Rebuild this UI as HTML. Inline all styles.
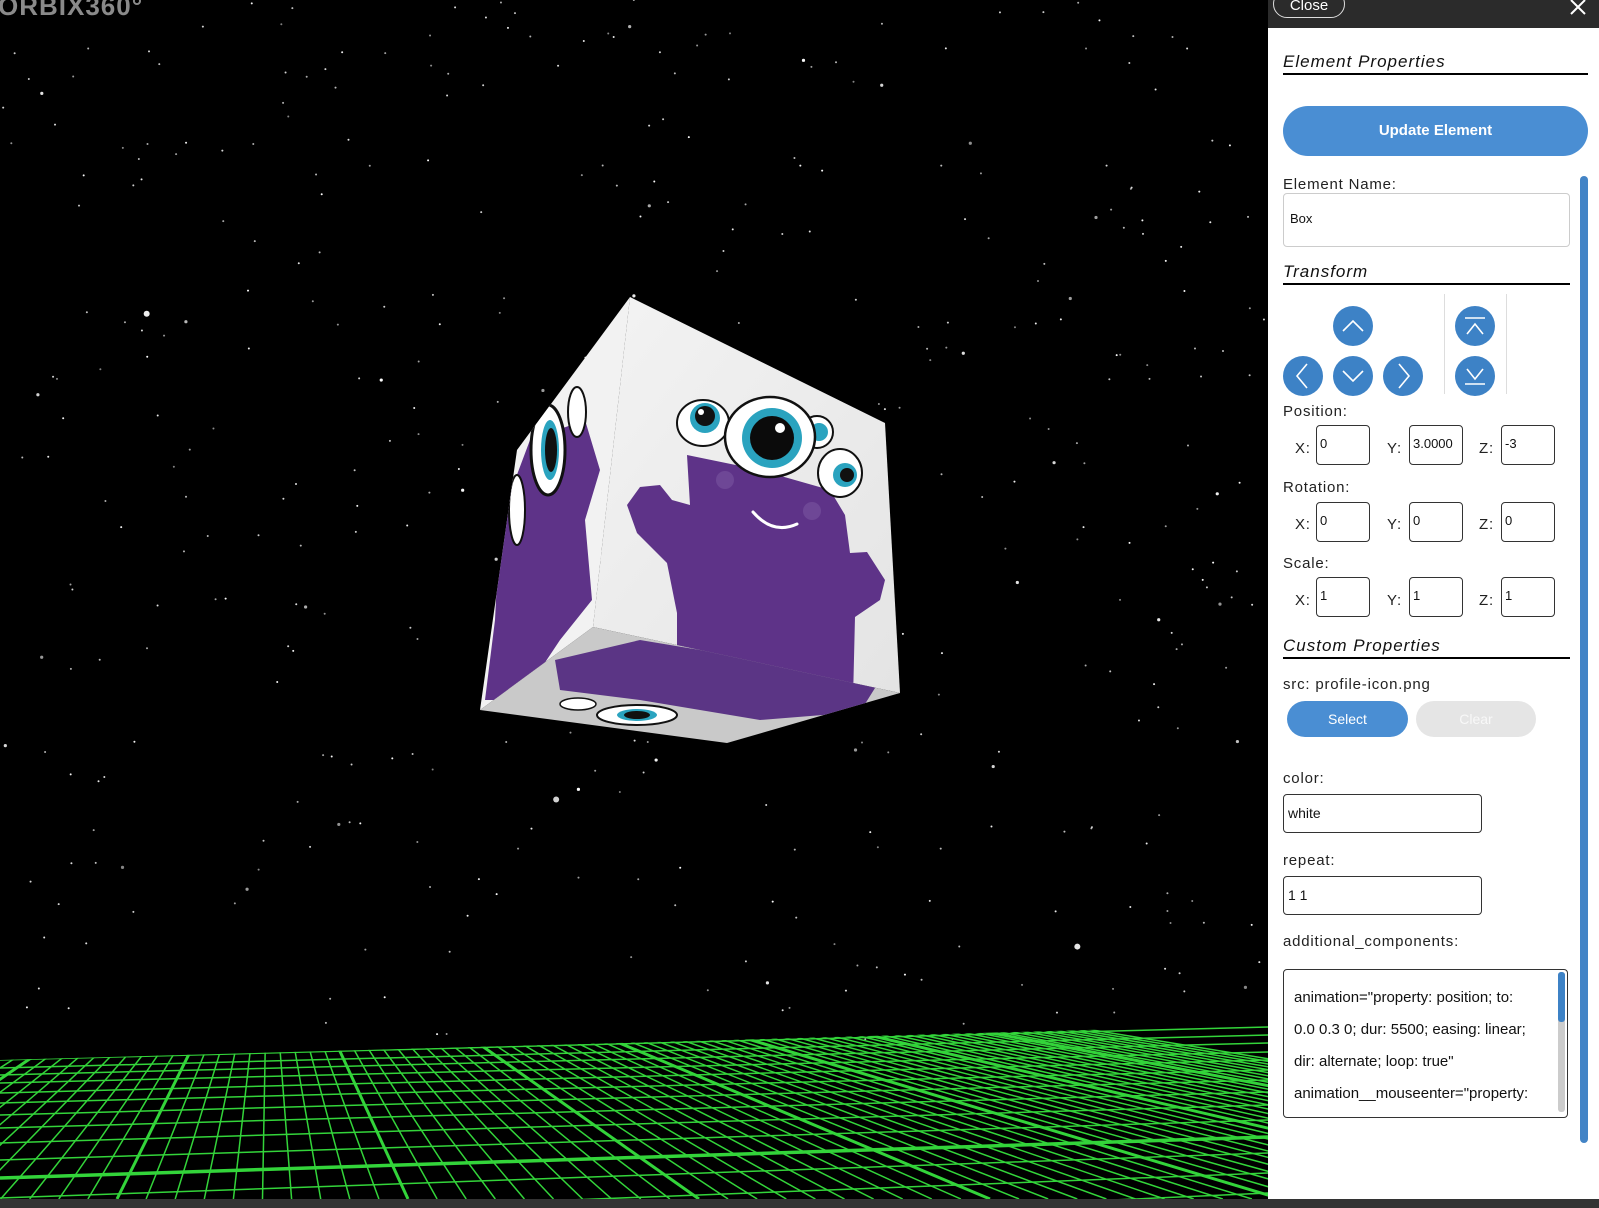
<!DOCTYPE html>
<html style="overflow:hidden"><head><meta charset="utf-8">
<style>
*{box-sizing:border-box;margin:0;padding:0}
body{width:1599px;height:1208px;overflow:hidden;background:#000;font-family:"Liberation Sans",sans-serif;position:relative}
#scene{position:absolute;left:0;top:0}
.logo{position:absolute;left:-2px;top:-9px;font-size:26px;font-weight:bold;color:#8a8a8a;letter-spacing:1px}
.panel{position:absolute;left:1268px;top:0;width:331px;height:1199px;background:#fff;overflow:hidden}
.hdr{position:absolute;left:0;top:0;width:331px;height:28px;background:#2b2b2b}
.close{position:absolute;left:5px;top:-10px;width:72px;height:28px;border:1.5px solid #ddd;border-radius:14px;color:#fff;font-size:15px;text-align:center;line-height:30px}
.a{position:absolute;color:#222;font-size:15px;letter-spacing:0.8px}
.h{position:absolute;font-style:italic;font-size:17px;letter-spacing:1px;color:#111;border-bottom:2px solid #000;padding-bottom:1px}
.btn{position:absolute;background:#4a8ed3;color:#fff;text-align:center;border-radius:26px;font-weight:bold}
.in{position:absolute;border:1px solid #333;border-radius:4px;font-size:13px;padding:10px 3px;color:#111;background:#fff}
.c{position:absolute;width:40px;height:40px;border-radius:50%;background:#3d82c6}
.sep{position:absolute;top:294px;height:100px;border-left:1px solid #ddd}
</style></head><body>
<svg id="scene" width="1268" height="1199" xmlns="http://www.w3.org/2000/svg">
<defs>
<clipPath id="gclip"><polygon points="0,1060 1268,1025 1268,1199 0,1199"/></clipPath>
<clipPath id="front"><polygon points="630,297 885,423 900,693 593,627"/></clipPath>
<clipPath id="left"><polygon points="630,297 593,627 480,710 517,450"/></clipPath>
<clipPath id="bot"><polygon points="593,627 900,693 727,743 480,710"/></clipPath>
<linearGradient id="fg" x1="0" y1="0" x2="1" y2="1"><stop offset="0" stop-color="#f3f3f3"/><stop offset="1" stop-color="#e4e4e4"/></linearGradient>
</defs>
<g id="stars"></g>
<g id="grid" clip-path="url(#gclip)"></g>
<polygon points="630,297 593,627 480,710 517,450" fill="#f2f2f2"/>
<polygon points="630,297 885,423 900,693 593,627" fill="url(#fg)"/>
<polygon points="593,627 900,693 727,743 480,710" fill="#c9c9c9"/>
<g clip-path="url(#front)">
<path d="M687,455 L760,470 L830,490 L845,515 L850,553 L867,552 L885,580 L880,600 L855,617 L853,700 L677,660 L677,613 L667,563 L637,533 L627,505 L640,487 L660,485 L672,500 L690,505 Z" fill="#5e3388"/>
<ellipse cx="703" cy="423" rx="26" ry="23" fill="#fff" stroke="#111" stroke-width="2"/>
<circle cx="705" cy="418" r="15" fill="#2aa3bf"/><circle cx="705" cy="416" r="10" fill="#111"/><circle cx="701" cy="412" r="3" fill="#fff"/>
<circle cx="817" cy="432" r="16" fill="#fff" stroke="#111" stroke-width="2"/><circle cx="819" cy="432" r="9" fill="#2aa3bf"/>
<ellipse cx="840" cy="473" rx="22" ry="24" fill="#fff" stroke="#111" stroke-width="2"/><circle cx="845" cy="475" r="12" fill="#2aa3bf"/><circle cx="847" cy="475" r="7" fill="#111"/>
<ellipse cx="770" cy="437" rx="45" ry="40" fill="#fff" stroke="#111" stroke-width="2.5"/>
<circle cx="772" cy="438" r="30" fill="#2aa3bf"/><circle cx="772" cy="438" r="22" fill="#0b0b0b"/><circle cx="780" cy="428" r="5" fill="#fff"/>
<path d="M753,512 Q773,535 797,524" fill="none" stroke="#fff" stroke-width="3" stroke-linecap="round"/>
<circle cx="725" cy="480" r="9" fill="#7a55a0" opacity=".6"/><circle cx="812" cy="511" r="9" fill="#7a55a0" opacity=".6"/>
</g>
<g clip-path="url(#left)">
<path d="M530,440 L585,420 L600,470 L585,520 L592,600 L560,640 L520,700 L485,700 L495,620 L500,520 Z" fill="#5e3388"/>
<ellipse cx="548" cy="450" rx="17" ry="45" fill="#fff" stroke="#111" stroke-width="3"/><ellipse cx="550" cy="450" rx="9" ry="30" fill="#2aa3bf"/><ellipse cx="551" cy="450" rx="6" ry="22" fill="#111"/>
<ellipse cx="577" cy="412" rx="9" ry="25" fill="#fff" stroke="#111" stroke-width="2"/>
<ellipse cx="517" cy="510" rx="8" ry="35" fill="#fff" stroke="#111" stroke-width="2"/>
<path d="M612,500 L625,485 L615,530 L600,560 Z" fill="#fff"/>
</g>
<g clip-path="url(#bot)">
<path d="M555,660 L640,640 L760,660 L880,680 L860,712 L760,720 L640,700 L560,690 Z" fill="#5b3585"/>
<ellipse cx="637" cy="715" rx="40" ry="10" fill="#fff" stroke="#111" stroke-width="2"/><ellipse cx="637" cy="715" rx="20" ry="6" fill="#2aa3bf"/><ellipse cx="637" cy="715" rx="13" ry="4" fill="#111"/>
<ellipse cx="578" cy="704" rx="18" ry="6" fill="#fff" stroke="#111" stroke-width="1.5"/>
</g>
</svg>
<div class="logo">ORBIX360°</div>
<div style="position:absolute;left:0;top:1199px;width:1599px;height:9px;background:#333"></div>
<div class="panel">
<div class="hdr"><div class="close">Close</div>
<svg style="position:absolute;left:300px;top:0" width="20" height="18"><path d="M3,0 L17,14 M17,0 L3,14" stroke="#fff" stroke-width="2"/></svg></div>
<div class="h" style="left:15px;top:52px;width:305px">Element Properties</div>
<div class="btn" style="left:15px;top:106px;width:305px;height:50px;line-height:50px;font-size:15px">Update Element</div>
<div style="position:absolute;left:312px;top:176px;width:8px;height:967px;background:#4384c6;border-radius:4px"></div>
<div class="a" style="left:15px;top:176px">Element Name:</div>
<div class="in" style="left:15px;top:193px;width:287px;height:54px;border-color:#ccc;padding:17px 6px">Box</div>
<div class="h" style="left:15px;top:262px;width:287px">Transform</div>
<div class="c" style="left:65px;top:306px"></div>
<div class="c" style="left:15px;top:356px"></div>
<div class="c" style="left:65px;top:356px"></div>
<div class="c" style="left:115px;top:356px"></div>
<div class="c" style="left:187px;top:306px"></div>
<div class="c" style="left:187px;top:356px"></div>
<div class="sep" style="left:176px"></div><div class="sep" style="left:238px"></div>
<svg style="position:absolute;left:0;top:0" width="331" height="420">
<g fill="none" stroke="#fff" stroke-width="1.6">
<path d="M75,331 L85,321 L95,331"/>
<path d="M39,364 L29,376 L39,388"/>
<path d="M75,371 L85,381 L95,371"/>
<path d="M131,364 L141,376 L131,388"/>
<path d="M197,318 L217,318 M199,334 L207,324 L215,334"/>
<path d="M199,369 L207,379 L215,369 M197,384 L217,384"/>
</g></svg>
<div class="a" style="left:15px;top:403px">Position:</div>
<div class="a" style="left:27px;top:440px">X:</div><div class="in" style="left:48px;top:425px;width:54px;height:40px">0</div>
<div class="a" style="left:119px;top:440px">Y:</div><div class="in" style="left:141px;top:425px;width:54px;height:40px">3.0000</div>
<div class="a" style="left:211px;top:440px">Z:</div><div class="in" style="left:233px;top:425px;width:54px;height:40px">-3</div>
<div class="a" style="left:15px;top:479px">Rotation:</div>
<div class="a" style="left:27px;top:516px">X:</div><div class="in" style="left:48px;top:502px;width:54px;height:40px">0</div>
<div class="a" style="left:119px;top:516px">Y:</div><div class="in" style="left:141px;top:502px;width:54px;height:40px">0</div>
<div class="a" style="left:211px;top:516px">Z:</div><div class="in" style="left:233px;top:502px;width:54px;height:40px">0</div>
<div class="a" style="left:15px;top:555px">Scale:</div>
<div class="a" style="left:27px;top:592px">X:</div><div class="in" style="left:48px;top:577px;width:54px;height:40px">1</div>
<div class="a" style="left:119px;top:592px">Y:</div><div class="in" style="left:141px;top:577px;width:54px;height:40px">1</div>
<div class="a" style="left:211px;top:592px">Z:</div><div class="in" style="left:233px;top:577px;width:54px;height:40px">1</div>
<div class="h" style="left:15px;top:636px;width:287px">Custom Properties</div>
<div class="a" style="left:15px;top:676px">src: profile-icon.png</div>
<div class="btn" style="left:19px;top:701px;width:121px;height:36px;line-height:36px;font-size:14px;font-weight:normal">Select</div>
<div class="btn" style="left:148px;top:701px;width:120px;height:36px;line-height:36px;font-size:14px;font-weight:normal;background:#e5e5e5;color:#f8f8f8">Clear</div>
<div class="a" style="left:15px;top:770px">color:</div>
<div class="in" style="left:15px;top:794px;width:199px;height:39px;font-size:14px;padding:10px 4px">white</div>
<div class="a" style="left:15px;top:852px">repeat:</div>
<div class="in" style="left:15px;top:876px;width:199px;height:39px;font-size:14px;padding:10px 4px">1 1</div>
<div class="a" style="left:15px;top:933px">additional_components:</div>
<div class="in" style="left:15px;top:969px;width:285px;height:149px;font-size:15px;line-height:32px;padding:12px 10px;overflow:hidden;white-space:nowrap">animation="property: position; to:<br>0.0 0.3 0; dur: 5500; easing: linear;<br>dir: alternate; loop: true"<br>animation__mouseenter="property:</div>
<div style="position:absolute;left:290px;top:972px;width:7px;height:140px;background:#ccc;border-radius:3px"></div>
<div style="position:absolute;left:290px;top:972px;width:7px;height:50px;background:#3d82c6;border-radius:3px"></div>
</div>
<script>
(function(){
var ns="http://www.w3.org/2000/svg";
var s=12345;function r(){s=(s*16807)%2147483647;return s/2147483647;}
var g=document.getElementById("stars");
for(var i=0;i<420;i++){var x=r()*1268,y=r()*1040;var c=document.createElementNS(ns,"circle");
var rr=r();c.setAttribute("cx",x);c.setAttribute("cy",y);c.setAttribute("r",rr>0.985?3:rr>0.9?1.6:1);
c.setAttribute("fill","#fff");c.setAttribute("opacity",0.5+r()*0.5);g.appendChild(c);}
var gr=document.getElementById("grid");
function ln(x1,y1,x2,y2,w){var l=document.createElementNS(ns,"line");l.setAttribute("x1",x1);l.setAttribute("y1",y1);l.setAttribute("x2",x2);l.setAttribute("y2",y2);
l.setAttribute("stroke","#33d43a");l.setAttribute("stroke-width",w);gr.appendChild(l);}
var vx=268,vy=895;
for(var k=-12;k<70;k++){var xb=117+29.1*k;var w=(k%10==0)?3:1.5;
ln(xb,1199,vx,vy,w);}
var L=[1060,1068,1075,1083,1093,1103,1115,1128,1143,1160,1178,1198,1222,1250,1282];
var R=[1027,1035,1043,1052,1060,1070,1080,1092,1105,1120,1137,1153,1173,1193,1215];
for(var j=0;j<L.length;j++){ln(0,L[j],1268,R[j],j==10?3.5:1.5);}
})();
</script>
</body></html>
